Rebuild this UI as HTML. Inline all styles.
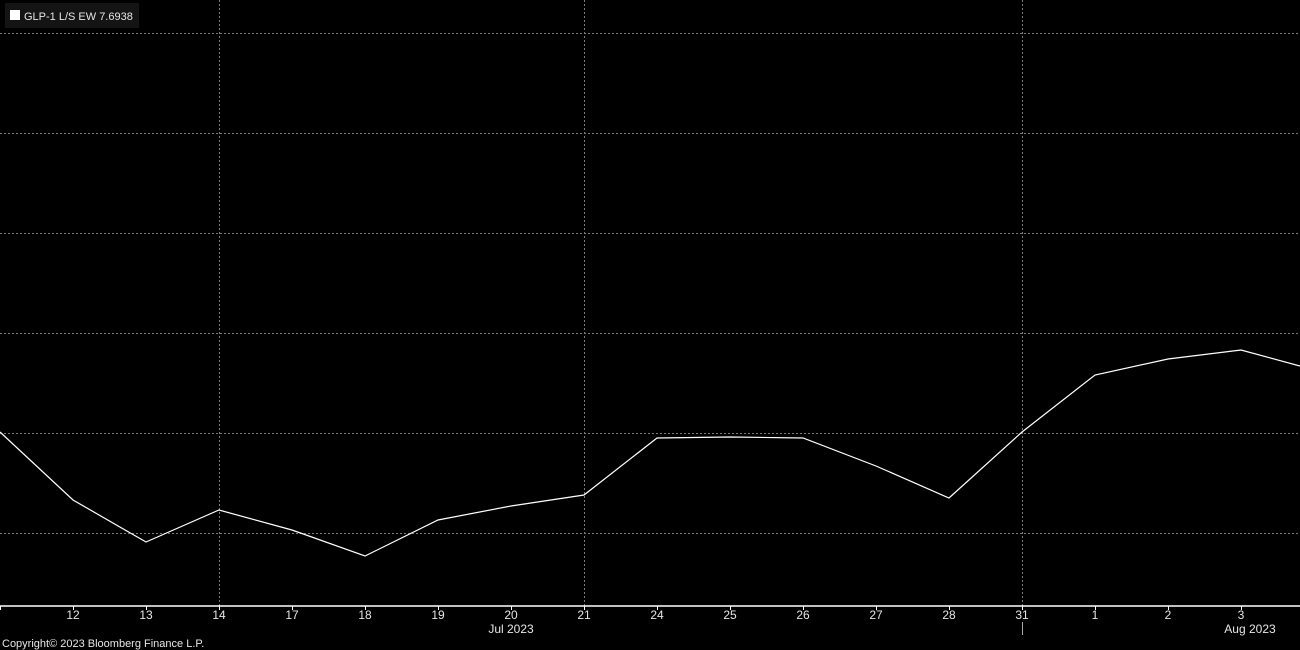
<!DOCTYPE html>
<html><head><meta charset="utf-8"><style>
html,body{margin:0;padding:0;background:#000;width:1300px;height:650px;overflow:hidden}
svg{display:block}
text{font-family:"Liberation Sans",sans-serif;fill:#e6e6e6}
</style></head><body>
<svg width="1300" height="650" viewBox="0 0 1300 650" xmlns="http://www.w3.org/2000/svg">
<rect width="1300" height="650" fill="#000"/>
<g stroke="#7a7a7a" stroke-width="1" stroke-dasharray="2,2">
<line x1="0" y1="33.5" x2="1300" y2="33.5"/>
<line x1="0" y1="133.5" x2="1300" y2="133.5"/>
<line x1="0" y1="233.5" x2="1300" y2="233.5"/>
<line x1="0" y1="333.5" x2="1300" y2="333.5"/>
<line x1="0" y1="433.5" x2="1300" y2="433.5"/>
<line x1="0" y1="533.5" x2="1300" y2="533.5"/>
<line x1="219.5" y1="0" x2="219.5" y2="606"/>
<line x1="584.5" y1="0" x2="584.5" y2="606"/>
<line x1="1022.5" y1="0" x2="1022.5" y2="606"/>
</g>
<rect x="5" y="3" width="134" height="25" fill="#141414"/>
<rect x="10" y="10" width="10" height="10" fill="#fff"/>
<text x="24" y="20" font-size="11">GLP-1 L/S EW 7.6938</text>
<polyline fill="none" stroke="#fff" stroke-width="1.2" points="0,432 73,500 146,542 219,510 292,530 365,556 438,520 511,506 584,495 657,438 730,437 803,438 876,466 949,498 1022,432 1095,375 1168,359 1241,350 1300,366"/>
<line x1="0" y1="606" x2="1300" y2="606" stroke="#fff" stroke-width="1.5"/>
<g stroke="#fff" stroke-width="1">
<line x1="0.5" y1="606" x2="0.5" y2="610"/>
<line x1="73.5" y1="606" x2="73.5" y2="610"/><line x1="146.5" y1="606" x2="146.5" y2="610"/><line x1="219.5" y1="606" x2="219.5" y2="610"/><line x1="292.5" y1="606" x2="292.5" y2="610"/><line x1="365.5" y1="606" x2="365.5" y2="610"/><line x1="438.5" y1="606" x2="438.5" y2="610"/><line x1="511.5" y1="606" x2="511.5" y2="610"/><line x1="584.5" y1="606" x2="584.5" y2="610"/><line x1="657.5" y1="606" x2="657.5" y2="610"/><line x1="730.5" y1="606" x2="730.5" y2="610"/><line x1="803.5" y1="606" x2="803.5" y2="610"/><line x1="876.5" y1="606" x2="876.5" y2="610"/><line x1="949.5" y1="606" x2="949.5" y2="610"/><line x1="1022.5" y1="606" x2="1022.5" y2="610"/><line x1="1095.5" y1="606" x2="1095.5" y2="610"/><line x1="1168.5" y1="606" x2="1168.5" y2="610"/><line x1="1241.5" y1="606" x2="1241.5" y2="610"/>
</g>
<line x1="1022.5" y1="622" x2="1022.5" y2="635" stroke="#aaa" stroke-width="1"/>
<g font-size="12" text-anchor="middle">
<text x="73" y="619">12</text><text x="146" y="619">13</text><text x="219" y="619">14</text><text x="292" y="619">17</text><text x="365" y="619">18</text><text x="438" y="619">19</text><text x="511" y="619">20</text><text x="584" y="619">21</text><text x="657" y="619">24</text><text x="730" y="619">25</text><text x="803" y="619">26</text><text x="876" y="619">27</text><text x="949" y="619">28</text><text x="1022" y="619">31</text><text x="1095" y="619">1</text><text x="1168" y="619">2</text><text x="1241" y="619">3</text>
<text x="511" y="633">Jul 2023</text>
<text x="1250" y="633">Aug 2023</text>
</g>
<text x="2" y="647" font-size="11">Copyright© 2023 Bloomberg Finance L.P.</text>
</svg>
</body></html>
